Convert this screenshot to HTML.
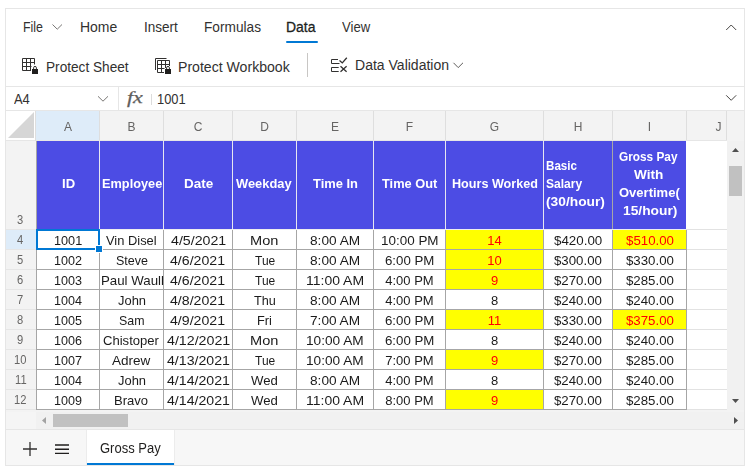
<!DOCTYPE html>
<html><head><meta charset="utf-8"><title>Spreadsheet</title>
<style>
html,body{margin:0;padding:0;background:#fff;}
body{width:752px;height:472px;position:relative;overflow:hidden;font-family:'Liberation Sans', sans-serif;}
div,span{position:absolute;}
span{white-space:pre;line-height:20px;transform-origin:0 50%;}
</style></head><body>
<div style="left:5px;top:8px;width:740px;height:458px;background:#ffffff;box-sizing:border-box;border:1px solid #e6e6e6;"></div>
<div style="left:6px;top:86px;width:738px;height:1px;background:#e6e6e6;"></div>
<div style="left:6px;top:110px;width:738px;height:1px;background:#e6e6e6;"></div>
<div style="left:286px;top:41px;width:32px;height:2px;background:#0078d4;border-radius:1px;"></div>
<div style="left:307px;top:53px;width:1px;height:24px;background:#c8c6c4;"></div>
<div style="left:118px;top:87px;width:1px;height:23px;background:#e6e6e6;"></div>
<div style="left:151px;top:94px;width:1px;height:11px;background:#dcdcdc;"></div>
<div style="left:6px;top:111px;width:738px;height:29px;background:#f3f3f3;"></div>
<div style="left:6px;top:111px;width:29px;height:29px;background:#ffffff;"></div>
<div style="left:36px;top:111px;width:63px;height:29px;background:#deecf9;"></div>
<div style="left:6px;top:140px;width:738px;height:1px;background:#e6e6e6;"></div>
<div style="left:35px;top:111px;width:1px;height:30px;background:#dedede;"></div>
<div style="left:99px;top:111px;width:1px;height:29px;background:#dedede;"></div>
<div style="left:163px;top:111px;width:1px;height:29px;background:#dedede;"></div>
<div style="left:232px;top:111px;width:1px;height:29px;background:#dedede;"></div>
<div style="left:296px;top:111px;width:1px;height:29px;background:#dedede;"></div>
<div style="left:373px;top:111px;width:1px;height:29px;background:#dedede;"></div>
<div style="left:445px;top:111px;width:1px;height:29px;background:#dedede;"></div>
<div style="left:543px;top:111px;width:1px;height:29px;background:#dedede;"></div>
<div style="left:612px;top:111px;width:1px;height:29px;background:#dedede;"></div>
<div style="left:686px;top:111px;width:1px;height:29px;background:#dedede;"></div>
<div style="left:726px;top:111px;width:1px;height:29px;background:#dedede;"></div>
<div style="left:6px;top:141px;width:30px;height:269px;background:#f3f3f3;"></div>
<div style="left:6px;top:230px;width:30px;height:19px;background:#deecf9;"></div>
<div style="left:6px;top:229px;width:30px;height:1px;background:#e6e6e6;"></div>
<div style="left:6px;top:249px;width:30px;height:1px;background:#e6e6e6;"></div>
<div style="left:6px;top:269px;width:30px;height:1px;background:#e6e6e6;"></div>
<div style="left:6px;top:289px;width:30px;height:1px;background:#e6e6e6;"></div>
<div style="left:6px;top:309px;width:30px;height:1px;background:#e6e6e6;"></div>
<div style="left:6px;top:329px;width:30px;height:1px;background:#e6e6e6;"></div>
<div style="left:6px;top:349px;width:30px;height:1px;background:#e6e6e6;"></div>
<div style="left:6px;top:369px;width:30px;height:1px;background:#e6e6e6;"></div>
<div style="left:6px;top:389px;width:30px;height:1px;background:#e6e6e6;"></div>
<div style="left:6px;top:409px;width:30px;height:1px;background:#e6e6e6;"></div>
<div style="left:36px;top:141px;width:691px;height:269px;background:#ffffff;"></div>
<div style="left:36px;top:229px;width:691px;height:1px;background:#e2e2e2;"></div>
<div style="left:36px;top:249px;width:691px;height:1px;background:#e2e2e2;"></div>
<div style="left:36px;top:269px;width:691px;height:1px;background:#e2e2e2;"></div>
<div style="left:36px;top:289px;width:691px;height:1px;background:#e2e2e2;"></div>
<div style="left:36px;top:309px;width:691px;height:1px;background:#e2e2e2;"></div>
<div style="left:36px;top:329px;width:691px;height:1px;background:#e2e2e2;"></div>
<div style="left:36px;top:349px;width:691px;height:1px;background:#e2e2e2;"></div>
<div style="left:36px;top:369px;width:691px;height:1px;background:#e2e2e2;"></div>
<div style="left:36px;top:389px;width:691px;height:1px;background:#e2e2e2;"></div>
<div style="left:36px;top:409px;width:691px;height:1px;background:#e2e2e2;"></div>
<div style="left:37px;top:141px;width:649px;height:88px;background:#4c4ce4;"></div>
<div style="left:99px;top:141px;width:1px;height:88px;background:#e6e6f0;"></div>
<div style="left:163px;top:141px;width:1px;height:88px;background:#e6e6f0;"></div>
<div style="left:232px;top:141px;width:1px;height:88px;background:#e6e6f0;"></div>
<div style="left:296px;top:141px;width:1px;height:88px;background:#e6e6f0;"></div>
<div style="left:373px;top:141px;width:1px;height:88px;background:#e6e6f0;"></div>
<div style="left:445px;top:141px;width:1px;height:88px;background:#e6e6f0;"></div>
<div style="left:543px;top:141px;width:1px;height:88px;background:#e6e6f0;"></div>
<div style="left:612px;top:141px;width:1px;height:88px;background:#a6a6a6;"></div>
<div style="left:36px;top:141px;width:1px;height:88px;background:#a6a6a6;"></div>
<div style="left:37px;top:229px;width:649px;height:1px;background:#eeeeee;"></div>
<div style="left:36px;top:230px;width:1px;height:180px;background:#a6a6a6;"></div>
<div style="left:99px;top:230px;width:1px;height:180px;background:#a6a6a6;"></div>
<div style="left:163px;top:230px;width:1px;height:180px;background:#a6a6a6;"></div>
<div style="left:232px;top:230px;width:1px;height:180px;background:#a6a6a6;"></div>
<div style="left:296px;top:230px;width:1px;height:180px;background:#a6a6a6;"></div>
<div style="left:373px;top:230px;width:1px;height:180px;background:#a6a6a6;"></div>
<div style="left:445px;top:230px;width:1px;height:180px;background:#a6a6a6;"></div>
<div style="left:543px;top:230px;width:1px;height:180px;background:#a6a6a6;"></div>
<div style="left:612px;top:230px;width:1px;height:180px;background:#a6a6a6;"></div>
<div style="left:686px;top:230px;width:1px;height:180px;background:#a6a6a6;"></div>
<div style="left:36px;top:249px;width:651px;height:1px;background:#a6a6a6;"></div>
<div style="left:36px;top:269px;width:651px;height:1px;background:#a6a6a6;"></div>
<div style="left:36px;top:289px;width:651px;height:1px;background:#a6a6a6;"></div>
<div style="left:36px;top:309px;width:651px;height:1px;background:#a6a6a6;"></div>
<div style="left:36px;top:329px;width:651px;height:1px;background:#a6a6a6;"></div>
<div style="left:36px;top:349px;width:651px;height:1px;background:#a6a6a6;"></div>
<div style="left:36px;top:369px;width:651px;height:1px;background:#a6a6a6;"></div>
<div style="left:36px;top:389px;width:651px;height:1px;background:#a6a6a6;"></div>
<div style="left:36px;top:409px;width:651px;height:1px;background:#a6a6a6;"></div>
<div style="left:446px;top:230px;width:97px;height:19px;background:#ffff00;"></div>
<div style="left:613px;top:230px;width:73px;height:19px;background:#ffff00;"></div>
<div style="left:446px;top:250px;width:97px;height:19px;background:#ffff00;"></div>
<div style="left:446px;top:270px;width:97px;height:19px;background:#ffff00;"></div>
<div style="left:446px;top:310px;width:97px;height:19px;background:#ffff00;"></div>
<div style="left:613px;top:310px;width:73px;height:19px;background:#ffff00;"></div>
<div style="left:446px;top:350px;width:97px;height:19px;background:#ffff00;"></div>
<div style="left:446px;top:390px;width:97px;height:19px;background:#ffff00;"></div>
<div style="left:36px;top:229px;width:64px;height:21px;background:transparent;box-sizing:border-box;border:2px solid #0078d4;"></div>
<div style="left:95px;top:245px;width:8px;height:8px;background:#0078d4;box-sizing:border-box;border:1px solid #fff;"></div>
<div style="left:727px;top:111px;width:17px;height:30px;background:#f3f3f3;"></div>
<div style="left:727px;top:141px;width:17px;height:269px;background:#f1f1f1;"></div>
<div style="left:729px;top:166px;width:13px;height:30px;background:#c1c1c1;"></div>
<div style="left:6px;top:410px;width:738px;height:2px;background:#f3f3f3;"></div>
<div style="left:6px;top:412px;width:30px;height:17px;background:#f5f5f5;"></div>
<div style="left:36px;top:412px;width:708px;height:17px;background:#f1f1f1;"></div>
<div style="left:53px;top:414px;width:75px;height:13px;background:#c1c1c1;"></div>
<div style="left:6px;top:429px;width:738px;height:1px;background:#e6e6e6;"></div>
<div style="left:6px;top:430px;width:738px;height:35px;background:#f7f7f7;"></div>
<div style="left:86px;top:430px;width:1px;height:35px;background:#ececec;"></div>
<div style="left:174px;top:430px;width:1px;height:35px;background:#ececec;"></div>
<div style="left:87px;top:430px;width:87px;height:35px;background:#ffffff;"></div>
<div style="left:87px;top:463px;width:87px;height:2px;background:#0078d4;"></div>

<svg style="position:absolute;left:0;top:0" width="752" height="472" viewBox="0 0 752 472" fill="none">
 <!-- file chevron -->
 <path d="M52.5 24.5 L57.25 29.2 L62 24.5" stroke="#797775" stroke-width="1"/>
 <!-- collapse chevron -->
 <path d="M726.2 30 L731.2 25 L736.2 30" stroke="#484644" stroke-width="1"/>
 <!-- formula expand chevron -->
 <path d="M726.2 95.3 L731.2 100.3 L736.2 95.3" stroke="#484644" stroke-width="1"/>
 <!-- name box chevron -->
 <path d="M98 96.3 L103 101.2 L108 96.3" stroke="#797775" stroke-width="1"/>
 <!-- data validation chevron -->
 <path d="M453.5 62.8 L458.2 67.6 L463 62.8" stroke="#605e5c" stroke-width="1"/>
 <!-- select-all triangle -->
 <path d="M8 138 L34 138 L34 112 Z" fill="#d6d6d6"/>
 <!-- protect sheet icon -->
 <g stroke="#323130" stroke-width="1">
  <path d="M22.5 58.5 H34.5 V64.5 M22.5 58.5 V70.5 H31 M22.5 62.5 H34.5 M22.5 66.5 H31.5 M26.5 58.5 V70.5 M30.5 58.5 V70.5"/>
  <path d="M33.6 69 V67.8 A1.4 1.4 0 0 1 36.4 67.8 V69"/>
 </g>
 <rect x="32" y="69" width="6" height="5" fill="#201f1e"/>
 <!-- protect workbook icon -->
 <g stroke="#323130" stroke-width="1">
  <path d="M155.5 70 V58.5 H166.5"/>
  <path d="M157.5 60.5 H169.5 V66 M157.5 60.5 V72.5 H164 M157.5 64.5 H169.5 M157.5 68.5 H164.5 M161.5 60.5 V72.5 M165.5 60.5 V68"/>
  <path d="M166.6 69 V67.8 A1.4 1.4 0 0 1 169.4 67.8 V69"/>
 </g>
 <rect x="165" y="69" width="6" height="5" fill="#201f1e"/>
 <!-- data validation icon -->
 <g stroke="#323130" stroke-width="1">
  <path d="M338 59.5 H331.5 V63.5 H339.5"/>
  <path d="M338.7 67.5 H331.5 V71.5 H338.7"/>
  <path d="M339.5 60.4 L342.3 62.9 L346.8 57.8" stroke-width="1.3"/>
  <path d="M340.5 66.2 L346.6 71.8 M346.6 66.2 L340.5 71.8" stroke-width="1.3"/>
 </g>
 <!-- scroll arrows -->
 <path d="M732 152 L735.5 148 L739 152 Z" fill="#505050"/>
 <path d="M732 399 L735.5 403 L739 399 Z" fill="#505050"/>
 <path d="M46 417 L42 420.5 L46 424 Z" fill="#a3a3a3"/>
 <path d="M734 417 L738 420.5 L734 424 Z" fill="#505050"/>
 <!-- add sheet + list -->
 <path d="M23 449 H37 M30 442 V456" stroke="#323130" stroke-width="1.3"/>
 <path d="M55 445 H69 M55 449.2 H69 M55 453.4 H69" stroke="#201f1e" stroke-width="1.4"/>
</svg>
<span style="left:22.87px;top:17.00px;color:#323130;font-family:'Liberation Sans', sans-serif;font-size:14px;font-weight:400;transform:scaleX(0.8841);">File</span>
<span style="left:79.50px;top:17.00px;color:#323130;font-family:'Liberation Sans', sans-serif;font-size:14px;font-weight:400;transform:scaleX(0.9984);">Home</span>
<span style="left:143.53px;top:17.00px;color:#323130;font-family:'Liberation Sans', sans-serif;font-size:14px;font-weight:400;transform:scaleX(0.9671);">Insert</span>
<span style="left:203.52px;top:17.00px;color:#323130;font-family:'Liberation Sans', sans-serif;font-size:14px;font-weight:400;transform:scaleX(0.9766);">Formulas</span>
<span style="left:286.10px;top:17.00px;color:#201f1e;font-family:'Liberation Sans', sans-serif;font-size:14px;font-weight:400;transform:scaleX(0.9970);-webkit-text-stroke:0.28px #201f1e;">Data</span>
<span style="left:342.25px;top:17.00px;color:#323130;font-family:'Liberation Sans', sans-serif;font-size:14px;font-weight:400;transform:scaleX(0.9360);">View</span>
<span style="left:45.93px;top:57.00px;color:#323130;font-family:'Liberation Sans', sans-serif;font-size:14px;font-weight:400;transform:scaleX(0.9745);">Protect Sheet</span>
<span style="left:178.49px;top:57.00px;color:#323130;font-family:'Liberation Sans', sans-serif;font-size:14px;font-weight:400;transform:scaleX(1.0067);">Protect Workbook</span>
<span style="left:355.00px;top:55.00px;color:#323130;font-family:'Liberation Sans', sans-serif;font-size:14px;font-weight:400;transform:scaleX(1.0019);">Data Validation</span>
<span style="left:14.00px;top:89.00px;color:#323130;font-family:'Liberation Sans', sans-serif;font-size:14px;font-weight:400;transform:scaleX(0.9228);">A4</span>
<span style="left:156.58px;top:89.00px;color:#323130;font-family:'Liberation Sans', sans-serif;font-size:14px;font-weight:400;transform:scaleX(0.9223);">1001</span>
<span style="left:127.00px;top:88.00px;color:#605e5c;font-family:'Liberation Serif', serif;font-size:16px;font-weight:400;font-style:italic;transform:scaleX(1.3717);-webkit-text-stroke:0.25px #605e5c;">fx</span>
<div style="left:0;top:0;width:752px;height:472px;will-change:transform">
<span style="left:64.00px;top:117.00px;color:#666564;font-family:'Liberation Sans', sans-serif;font-size:12px;font-weight:400;transform:scaleX(1.0000);">A</span>
<span style="left:127.50px;top:117.00px;color:#666564;font-family:'Liberation Sans', sans-serif;font-size:12px;font-weight:400;transform:scaleX(1.0000);">B</span>
<span style="left:193.67px;top:117.00px;color:#666564;font-family:'Liberation Sans', sans-serif;font-size:12px;font-weight:400;transform:scaleX(1.0000);">C</span>
<span style="left:260.17px;top:117.00px;color:#666564;font-family:'Liberation Sans', sans-serif;font-size:12px;font-weight:400;transform:scaleX(1.0000);">D</span>
<span style="left:331.00px;top:117.00px;color:#666564;font-family:'Liberation Sans', sans-serif;font-size:12px;font-weight:400;transform:scaleX(1.0000);">E</span>
<span style="left:405.83px;top:117.00px;color:#666564;font-family:'Liberation Sans', sans-serif;font-size:12px;font-weight:400;transform:scaleX(1.0000);">F</span>
<span style="left:489.83px;top:117.00px;color:#666564;font-family:'Liberation Sans', sans-serif;font-size:12px;font-weight:400;transform:scaleX(1.0000);">G</span>
<span style="left:573.67px;top:117.00px;color:#666564;font-family:'Liberation Sans', sans-serif;font-size:12px;font-weight:400;transform:scaleX(1.0000);">H</span>
<span style="left:647.83px;top:117.00px;color:#666564;font-family:'Liberation Sans', sans-serif;font-size:12px;font-weight:400;transform:scaleX(1.0000);">I</span>
<span style="left:715.50px;top:117.00px;color:#666564;font-family:'Liberation Sans', sans-serif;font-size:12px;font-weight:400;transform:scaleX(1.0000);">J</span>
<span style="left:17.40px;top:210.00px;color:#666564;font-family:'Liberation Sans', sans-serif;font-size:12px;font-weight:400;transform:scaleX(0.9300);">3</span>
<span style="left:17.40px;top:230.00px;color:#666564;font-family:'Liberation Sans', sans-serif;font-size:12px;font-weight:400;transform:scaleX(0.9300);">4</span>
<span style="left:17.40px;top:250.00px;color:#666564;font-family:'Liberation Sans', sans-serif;font-size:12px;font-weight:400;transform:scaleX(0.9300);">5</span>
<span style="left:17.40px;top:270.00px;color:#666564;font-family:'Liberation Sans', sans-serif;font-size:12px;font-weight:400;transform:scaleX(0.9300);">6</span>
<span style="left:17.40px;top:290.00px;color:#666564;font-family:'Liberation Sans', sans-serif;font-size:12px;font-weight:400;transform:scaleX(0.9300);">7</span>
<span style="left:17.40px;top:310.00px;color:#666564;font-family:'Liberation Sans', sans-serif;font-size:12px;font-weight:400;transform:scaleX(0.9300);">8</span>
<span style="left:17.40px;top:330.00px;color:#666564;font-family:'Liberation Sans', sans-serif;font-size:12px;font-weight:400;transform:scaleX(0.9300);">9</span>
<span style="left:14.29px;top:350.00px;color:#666564;font-family:'Liberation Sans', sans-serif;font-size:12px;font-weight:400;transform:scaleX(0.9300);">10</span>
<span style="left:14.71px;top:370.00px;color:#666564;font-family:'Liberation Sans', sans-serif;font-size:12px;font-weight:400;transform:scaleX(0.9300);">11</span>
<span style="left:14.29px;top:390.00px;color:#666564;font-family:'Liberation Sans', sans-serif;font-size:12px;font-weight:400;transform:scaleX(0.9300);">12</span>
<span style="left:54.00px;top:231.00px;color:#1b1b1b;font-family:'Liberation Sans', sans-serif;font-size:13px;font-weight:400;transform:scaleX(0.9760);">1001</span>
<span style="left:106.12px;top:231.00px;color:#1b1b1b;font-family:'Liberation Sans', sans-serif;font-size:13px;font-weight:400;transform:scaleX(0.9917);">Vin Disel</span>
<span style="left:170.50px;top:231.00px;color:#1b1b1b;font-family:'Liberation Sans', sans-serif;font-size:13px;font-weight:400;transform:scaleX(1.0918);">4/5/2021</span>
<span style="left:249.88px;top:231.00px;color:#1b1b1b;font-family:'Liberation Sans', sans-serif;font-size:13px;font-weight:400;transform:scaleX(1.1222);">Mon</span>
<span style="left:310.00px;top:231.00px;color:#1b1b1b;font-family:'Liberation Sans', sans-serif;font-size:13px;font-weight:400;transform:scaleX(1.0508);">8:00 AM</span>
<span style="left:381.15px;top:231.00px;color:#1b1b1b;font-family:'Liberation Sans', sans-serif;font-size:13px;font-weight:400;transform:scaleX(1.0344);">10:00 PM</span>
<span style="left:487.27px;top:231.00px;color:#ff0000;font-family:'Liberation Sans', sans-serif;font-size:13px;font-weight:400;transform:scaleX(1.0000);">14</span>
<span style="left:554.00px;top:231.00px;color:#1b1b1b;font-family:'Liberation Sans', sans-serif;font-size:13px;font-weight:400;transform:scaleX(1.0265);">$420.00</span>
<span style="left:625.65px;top:231.00px;color:#ff0000;font-family:'Liberation Sans', sans-serif;font-size:13px;font-weight:400;transform:scaleX(1.0201);">$510.00</span>
<span style="left:54.00px;top:251.00px;color:#1b1b1b;font-family:'Liberation Sans', sans-serif;font-size:13px;font-weight:400;transform:scaleX(0.9680);">1002</span>
<span style="left:115.62px;top:251.00px;color:#1b1b1b;font-family:'Liberation Sans', sans-serif;font-size:13px;font-weight:400;transform:scaleX(0.9618);">Steve</span>
<span style="left:170.47px;top:251.00px;color:#1b1b1b;font-family:'Liberation Sans', sans-serif;font-size:13px;font-weight:400;transform:scaleX(1.0880);">4/6/2021</span>
<span style="left:254.50px;top:251.00px;color:#1b1b1b;font-family:'Liberation Sans', sans-serif;font-size:13px;font-weight:400;transform:scaleX(0.9221);">Tue</span>
<span style="left:310.00px;top:251.00px;color:#1b1b1b;font-family:'Liberation Sans', sans-serif;font-size:13px;font-weight:400;transform:scaleX(1.0508);">8:00 AM</span>
<span style="left:385.25px;top:251.00px;color:#1b1b1b;font-family:'Liberation Sans', sans-serif;font-size:13px;font-weight:400;transform:scaleX(1.0192);">6:00 PM</span>
<span style="left:487.27px;top:251.00px;color:#ff0000;font-family:'Liberation Sans', sans-serif;font-size:13px;font-weight:400;transform:scaleX(1.0000);">10</span>
<span style="left:554.03px;top:251.00px;color:#1b1b1b;font-family:'Liberation Sans', sans-serif;font-size:13px;font-weight:400;transform:scaleX(1.0200);">$300.00</span>
<span style="left:625.53px;top:251.00px;color:#1b1b1b;font-family:'Liberation Sans', sans-serif;font-size:13px;font-weight:400;transform:scaleX(1.0200);">$330.00</span>
<span style="left:54.00px;top:271.00px;color:#1b1b1b;font-family:'Liberation Sans', sans-serif;font-size:13px;font-weight:400;transform:scaleX(0.9680);">1003</span>
<div style="left:100px;top:271.00px;width:64px;height:20px;overflow:hidden"><span style="left:101.18px;top:271.00px;color:#1b1b1b;font-family:'Liberation Sans', sans-serif;font-size:13px;font-weight:400;transform:scaleX(1.0203);left:1.18px;top:0">Paul Waull</span></div>
<span style="left:170.47px;top:271.00px;color:#1b1b1b;font-family:'Liberation Sans', sans-serif;font-size:13px;font-weight:400;transform:scaleX(1.0880);">4/6/2021</span>
<span style="left:254.50px;top:271.00px;color:#1b1b1b;font-family:'Liberation Sans', sans-serif;font-size:13px;font-weight:400;transform:scaleX(0.9221);">Tue</span>
<span style="left:306.05px;top:271.00px;color:#1b1b1b;font-family:'Liberation Sans', sans-serif;font-size:13px;font-weight:400;transform:scaleX(1.0752);">11:00 AM</span>
<span style="left:385.29px;top:271.00px;color:#1b1b1b;font-family:'Liberation Sans', sans-serif;font-size:13px;font-weight:400;transform:scaleX(1.0000);">4:00 PM</span>
<span style="left:490.89px;top:271.00px;color:#ff0000;font-family:'Liberation Sans', sans-serif;font-size:13px;font-weight:400;transform:scaleX(1.0000);">9</span>
<span style="left:554.03px;top:271.00px;color:#1b1b1b;font-family:'Liberation Sans', sans-serif;font-size:13px;font-weight:400;transform:scaleX(1.0200);">$270.00</span>
<span style="left:625.53px;top:271.00px;color:#1b1b1b;font-family:'Liberation Sans', sans-serif;font-size:13px;font-weight:400;transform:scaleX(1.0200);">$285.00</span>
<span style="left:54.00px;top:291.00px;color:#1b1b1b;font-family:'Liberation Sans', sans-serif;font-size:13px;font-weight:400;transform:scaleX(0.9680);">1004</span>
<span style="left:117.60px;top:291.00px;color:#1b1b1b;font-family:'Liberation Sans', sans-serif;font-size:13px;font-weight:400;transform:scaleX(0.9943);">John</span>
<span style="left:170.47px;top:291.00px;color:#1b1b1b;font-family:'Liberation Sans', sans-serif;font-size:13px;font-weight:400;transform:scaleX(1.0880);">4/8/2021</span>
<span style="left:253.70px;top:291.00px;color:#1b1b1b;font-family:'Liberation Sans', sans-serif;font-size:13px;font-weight:400;transform:scaleX(0.9743);">Thu</span>
<span style="left:310.00px;top:291.00px;color:#1b1b1b;font-family:'Liberation Sans', sans-serif;font-size:13px;font-weight:400;transform:scaleX(1.0508);">8:00 AM</span>
<span style="left:385.29px;top:291.00px;color:#1b1b1b;font-family:'Liberation Sans', sans-serif;font-size:13px;font-weight:400;transform:scaleX(1.0000);">4:00 PM</span>
<span style="left:490.89px;top:291.00px;color:#1b1b1b;font-family:'Liberation Sans', sans-serif;font-size:13px;font-weight:400;transform:scaleX(1.0000);">8</span>
<span style="left:554.03px;top:291.00px;color:#1b1b1b;font-family:'Liberation Sans', sans-serif;font-size:13px;font-weight:400;transform:scaleX(1.0200);">$240.00</span>
<span style="left:625.53px;top:291.00px;color:#1b1b1b;font-family:'Liberation Sans', sans-serif;font-size:13px;font-weight:400;transform:scaleX(1.0200);">$240.00</span>
<span style="left:54.00px;top:311.00px;color:#1b1b1b;font-family:'Liberation Sans', sans-serif;font-size:13px;font-weight:400;transform:scaleX(0.9680);">1005</span>
<span style="left:119.15px;top:311.00px;color:#1b1b1b;font-family:'Liberation Sans', sans-serif;font-size:13px;font-weight:400;transform:scaleX(0.9536);">Sam</span>
<span style="left:170.47px;top:311.00px;color:#1b1b1b;font-family:'Liberation Sans', sans-serif;font-size:13px;font-weight:400;transform:scaleX(1.0880);">4/9/2021</span>
<span style="left:256.52px;top:311.00px;color:#1b1b1b;font-family:'Liberation Sans', sans-serif;font-size:13px;font-weight:400;transform:scaleX(0.9811);">Fri</span>
<span style="left:309.58px;top:311.00px;color:#1b1b1b;font-family:'Liberation Sans', sans-serif;font-size:13px;font-weight:400;transform:scaleX(1.0500);">7:00 AM</span>
<span style="left:385.25px;top:311.00px;color:#1b1b1b;font-family:'Liberation Sans', sans-serif;font-size:13px;font-weight:400;transform:scaleX(1.0192);">6:00 PM</span>
<span style="left:487.75px;top:311.00px;color:#ff0000;font-family:'Liberation Sans', sans-serif;font-size:13px;font-weight:400;transform:scaleX(1.0000);">11</span>
<span style="left:554.03px;top:311.00px;color:#1b1b1b;font-family:'Liberation Sans', sans-serif;font-size:13px;font-weight:400;transform:scaleX(1.0200);">$330.00</span>
<span style="left:625.53px;top:311.00px;color:#ff0000;font-family:'Liberation Sans', sans-serif;font-size:13px;font-weight:400;transform:scaleX(1.0200);">$375.00</span>
<span style="left:54.00px;top:331.00px;color:#1b1b1b;font-family:'Liberation Sans', sans-serif;font-size:13px;font-weight:400;transform:scaleX(0.9680);">1006</span>
<span style="left:103.20px;top:331.00px;color:#1b1b1b;font-family:'Liberation Sans', sans-serif;font-size:13px;font-weight:400;transform:scaleX(1.0052);">Chistoper</span>
<span style="left:166.50px;top:331.00px;color:#1b1b1b;font-family:'Liberation Sans', sans-serif;font-size:13px;font-weight:400;transform:scaleX(1.0937);">4/12/2021</span>
<span style="left:249.88px;top:331.00px;color:#1b1b1b;font-family:'Liberation Sans', sans-serif;font-size:13px;font-weight:400;transform:scaleX(1.1222);">Mon</span>
<span style="left:305.79px;top:331.00px;color:#1b1b1b;font-family:'Liberation Sans', sans-serif;font-size:13px;font-weight:400;transform:scaleX(1.0500);">10:00 AM</span>
<span style="left:385.25px;top:331.00px;color:#1b1b1b;font-family:'Liberation Sans', sans-serif;font-size:13px;font-weight:400;transform:scaleX(1.0192);">6:00 PM</span>
<span style="left:490.89px;top:331.00px;color:#1b1b1b;font-family:'Liberation Sans', sans-serif;font-size:13px;font-weight:400;transform:scaleX(1.0000);">8</span>
<span style="left:554.03px;top:331.00px;color:#1b1b1b;font-family:'Liberation Sans', sans-serif;font-size:13px;font-weight:400;transform:scaleX(1.0200);">$240.00</span>
<span style="left:625.53px;top:331.00px;color:#1b1b1b;font-family:'Liberation Sans', sans-serif;font-size:13px;font-weight:400;transform:scaleX(1.0200);">$240.00</span>
<span style="left:54.00px;top:351.00px;color:#1b1b1b;font-family:'Liberation Sans', sans-serif;font-size:13px;font-weight:400;transform:scaleX(0.9680);">1007</span>
<span style="left:112.00px;top:351.00px;color:#1b1b1b;font-family:'Liberation Sans', sans-serif;font-size:13px;font-weight:400;transform:scaleX(1.0411);">Adrew</span>
<span style="left:166.54px;top:351.00px;color:#1b1b1b;font-family:'Liberation Sans', sans-serif;font-size:13px;font-weight:400;transform:scaleX(1.0880);">4/13/2021</span>
<span style="left:254.50px;top:351.00px;color:#1b1b1b;font-family:'Liberation Sans', sans-serif;font-size:13px;font-weight:400;transform:scaleX(0.9221);">Tue</span>
<span style="left:305.79px;top:351.00px;color:#1b1b1b;font-family:'Liberation Sans', sans-serif;font-size:13px;font-weight:400;transform:scaleX(1.0500);">10:00 AM</span>
<span style="left:385.29px;top:351.00px;color:#1b1b1b;font-family:'Liberation Sans', sans-serif;font-size:13px;font-weight:400;transform:scaleX(1.0000);">7:00 PM</span>
<span style="left:490.89px;top:351.00px;color:#ff0000;font-family:'Liberation Sans', sans-serif;font-size:13px;font-weight:400;transform:scaleX(1.0000);">9</span>
<span style="left:554.03px;top:351.00px;color:#1b1b1b;font-family:'Liberation Sans', sans-serif;font-size:13px;font-weight:400;transform:scaleX(1.0200);">$270.00</span>
<span style="left:625.53px;top:351.00px;color:#1b1b1b;font-family:'Liberation Sans', sans-serif;font-size:13px;font-weight:400;transform:scaleX(1.0200);">$285.00</span>
<span style="left:54.00px;top:371.00px;color:#1b1b1b;font-family:'Liberation Sans', sans-serif;font-size:13px;font-weight:400;transform:scaleX(0.9680);">1004</span>
<span style="left:117.60px;top:371.00px;color:#1b1b1b;font-family:'Liberation Sans', sans-serif;font-size:13px;font-weight:400;transform:scaleX(0.9943);">John</span>
<span style="left:166.54px;top:371.00px;color:#1b1b1b;font-family:'Liberation Sans', sans-serif;font-size:13px;font-weight:400;transform:scaleX(1.0880);">4/14/2021</span>
<span style="left:251.20px;top:371.00px;color:#1b1b1b;font-family:'Liberation Sans', sans-serif;font-size:13px;font-weight:400;transform:scaleX(1.0127);">Wed</span>
<span style="left:310.00px;top:371.00px;color:#1b1b1b;font-family:'Liberation Sans', sans-serif;font-size:13px;font-weight:400;transform:scaleX(1.0508);">8:00 AM</span>
<span style="left:385.29px;top:371.00px;color:#1b1b1b;font-family:'Liberation Sans', sans-serif;font-size:13px;font-weight:400;transform:scaleX(1.0000);">4:00 PM</span>
<span style="left:490.89px;top:371.00px;color:#1b1b1b;font-family:'Liberation Sans', sans-serif;font-size:13px;font-weight:400;transform:scaleX(1.0000);">8</span>
<span style="left:554.03px;top:371.00px;color:#1b1b1b;font-family:'Liberation Sans', sans-serif;font-size:13px;font-weight:400;transform:scaleX(1.0200);">$240.00</span>
<span style="left:625.53px;top:371.00px;color:#1b1b1b;font-family:'Liberation Sans', sans-serif;font-size:13px;font-weight:400;transform:scaleX(1.0200);">$240.00</span>
<span style="left:54.00px;top:391.00px;color:#1b1b1b;font-family:'Liberation Sans', sans-serif;font-size:13px;font-weight:400;transform:scaleX(0.9680);">1009</span>
<span style="left:114.10px;top:391.00px;color:#1b1b1b;font-family:'Liberation Sans', sans-serif;font-size:13px;font-weight:400;transform:scaleX(1.0021);">Bravo</span>
<span style="left:166.54px;top:391.00px;color:#1b1b1b;font-family:'Liberation Sans', sans-serif;font-size:13px;font-weight:400;transform:scaleX(1.0880);">4/14/2021</span>
<span style="left:251.20px;top:391.00px;color:#1b1b1b;font-family:'Liberation Sans', sans-serif;font-size:13px;font-weight:400;transform:scaleX(1.0127);">Wed</span>
<span style="left:306.05px;top:391.00px;color:#1b1b1b;font-family:'Liberation Sans', sans-serif;font-size:13px;font-weight:400;transform:scaleX(1.0752);">11:00 AM</span>
<span style="left:385.29px;top:391.00px;color:#1b1b1b;font-family:'Liberation Sans', sans-serif;font-size:13px;font-weight:400;transform:scaleX(1.0000);">8:00 PM</span>
<span style="left:490.89px;top:391.00px;color:#ff0000;font-family:'Liberation Sans', sans-serif;font-size:13px;font-weight:400;transform:scaleX(1.0000);">9</span>
<span style="left:554.03px;top:391.00px;color:#1b1b1b;font-family:'Liberation Sans', sans-serif;font-size:13px;font-weight:400;transform:scaleX(1.0200);">$270.00</span>
<span style="left:625.53px;top:391.00px;color:#1b1b1b;font-family:'Liberation Sans', sans-serif;font-size:13px;font-weight:400;transform:scaleX(1.0200);">$285.00</span>
<span style="left:61.65px;top:174.00px;color:#ffffff;font-family:'Liberation Sans', sans-serif;font-size:13px;font-weight:700;transform:scaleX(1.0070);">ID</span>
<span style="left:101.50px;top:174.00px;color:#ffffff;font-family:'Liberation Sans', sans-serif;font-size:13px;font-weight:700;transform:scaleX(0.9807);">Employee</span>
<span style="left:183.50px;top:174.00px;color:#ffffff;font-family:'Liberation Sans', sans-serif;font-size:13px;font-weight:700;transform:scaleX(1.0377);">Date</span>
<span style="left:236.30px;top:174.00px;color:#ffffff;font-family:'Liberation Sans', sans-serif;font-size:13px;font-weight:700;transform:scaleX(0.9913);">Weekday</span>
<span style="left:312.50px;top:174.00px;color:#ffffff;font-family:'Liberation Sans', sans-serif;font-size:13px;font-weight:700;transform:scaleX(0.9927);">Time In</span>
<span style="left:381.50px;top:174.00px;color:#ffffff;font-family:'Liberation Sans', sans-serif;font-size:13px;font-weight:700;transform:scaleX(0.9864);">Time Out</span>
<span style="left:451.50px;top:174.00px;color:#ffffff;font-family:'Liberation Sans', sans-serif;font-size:13px;font-weight:700;transform:scaleX(0.9699);">Hours Worked</span>
<span style="left:546.40px;top:156.00px;color:#ffffff;font-family:'Liberation Sans', sans-serif;font-size:13px;font-weight:700;transform:scaleX(0.8938);">Basic</span>
<span style="left:546.40px;top:174.00px;color:#ffffff;font-family:'Liberation Sans', sans-serif;font-size:13px;font-weight:700;transform:scaleX(0.9246);">Salary</span>
<span style="left:546.40px;top:192.00px;color:#ffffff;font-family:'Liberation Sans', sans-serif;font-size:13px;font-weight:700;transform:scaleX(1.0600);">(30/hour)</span>
<span style="left:618.70px;top:147.00px;color:#ffffff;font-family:'Liberation Sans', sans-serif;font-size:13px;font-weight:700;transform:scaleX(0.9096);">Gross Pay</span>
<span style="left:633.60px;top:165.00px;color:#ffffff;font-family:'Liberation Sans', sans-serif;font-size:13px;font-weight:700;transform:scaleX(1.0464);">With</span>
<span style="left:619.00px;top:183.00px;color:#ffffff;font-family:'Liberation Sans', sans-serif;font-size:13px;font-weight:700;transform:scaleX(1.0006);">Overtime(</span>
<span style="left:622.60px;top:201.00px;color:#ffffff;font-family:'Liberation Sans', sans-serif;font-size:13px;font-weight:700;transform:scaleX(1.0598);">15/hour)</span>
</div>
<span style="left:100.00px;top:438.00px;color:#201f1e;font-family:'Liberation Sans', sans-serif;font-size:14px;font-weight:400;transform:scaleX(0.9288);">Gross Pay</span>
</body></html>
